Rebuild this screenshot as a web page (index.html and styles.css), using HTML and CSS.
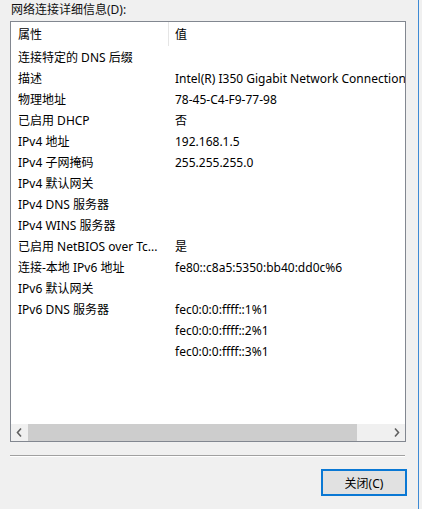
FILE: index.html
```html
<!DOCTYPE html>
<html lang="zh-CN">
<head>
<meta charset="utf-8">
<title>网络连接详细信息</title>
<link rel="stylesheet" href="styles.css">
</head>
<body>
<div class="dialog">
  <div class="label">网络连接详细信息(D):</div>
  <div class="listbox">
    <div class="header">
      <div class="c1">属性</div>
      <div class="c2">值</div>
    </div>
    <div class="rows">
      <div class="row"><div class="c1">连接特定的 DNS 后缀</div><div class="c2"></div></div>
      <div class="row"><div class="c1">描述</div><div class="c2">Intel(R) I350 Gigabit Network Connection</div></div>
      <div class="row"><div class="c1">物理地址</div><div class="c2">78-45-C4-F9-77-98</div></div>
      <div class="row"><div class="c1">已启用 DHCP</div><div class="c2">否</div></div>
      <div class="row"><div class="c1">IPv4 地址</div><div class="c2">192.168.1.5</div></div>
      <div class="row"><div class="c1">IPv4 子网掩码</div><div class="c2">255.255.255.0</div></div>
      <div class="row"><div class="c1">IPv4 默认网关</div><div class="c2"></div></div>
      <div class="row"><div class="c1">IPv4 DNS 服务器</div><div class="c2"></div></div>
      <div class="row"><div class="c1">IPv4 WINS 服务器</div><div class="c2"></div></div>
      <div class="row"><div class="c1">已启用 NetBIOS over Tc...</div><div class="c2">是</div></div>
      <div class="row"><div class="c1">连接-本地 IPv6 地址</div><div class="c2">fe80::c8a5:5350:bb40:dd0c%6</div></div>
      <div class="row"><div class="c1">IPv6 默认网关</div><div class="c2"></div></div>
      <div class="row"><div class="c1">IPv6 DNS 服务器</div><div class="c2">fec0:0:0:ffff::1%1</div></div>
      <div class="row"><div class="c1"></div><div class="c2">fec0:0:0:ffff::2%1</div></div>
      <div class="row"><div class="c1"></div><div class="c2">fec0:0:0:ffff::3%1</div></div>
    </div>
    <div class="hscroll">
      <div class="arrow">
        <svg width="17" height="17" viewBox="0 0 17 17"><path d="M10 4.5 L6.5 8.5 L10 12.5" fill="none" stroke="#606060" stroke-width="1.6"/></svg>
      </div>
      <div class="thumb"></div>
      <div class="track"></div>
      <div class="arrow">
        <svg width="17" height="17" viewBox="0 0 17 17"><path d="M7 4.5 L10.5 8.5 L7 12.5" fill="none" stroke="#606060" stroke-width="1.6"/></svg>
      </div>
    </div>
  </div>
  <div class="sep"></div>
  <div class="footer">
    <button class="btn">关闭(C)</button>
  </div>
</div>
</body>
</html>
```

FILE: styles.css
```css
html, body {
  margin: 0;
  padding: 0;
  background: #f0f0f0;
}
body {
  width: 422px;
  height: 509px;
  overflow: hidden;
  font-family: "Noto Sans", "Noto Sans CJK SC", sans-serif;
  font-size: 12px;
  color: #000;
}
.dialog {
  width: 418px;
  height: 509px;
  border-right: 1px solid #3d8ad4;
  display: flex;
  flex-direction: column;
}
.label {
  height: 21px;
  box-sizing: border-box;
  padding-top: 1px;
  line-height: 17px;
  padding-left: 11px;
  color: #111;
}
.listbox {
  margin-left: 10px;
  width: 396px;
  height: 421px;
  box-sizing: border-box;
  border: 1px solid #828790;
  background: #fff;
  display: flex;
  flex-direction: column;
  overflow: hidden;
}
.header {
  height: 24px;
  display: flex;
  flex: none;
  overflow: hidden;
}
.header .c1 {
  border-right: 1px solid #e5e5e5;
}
.header .c1, .header .c2 {
  padding-top: 1px;
  line-height: 23px;
}
.c1 {
  width: 150px;
  padding-left: 7px;
  flex: none;
  white-space: nowrap;
  overflow: hidden;
}
.c2 {
  padding-left: 6px;
  white-space: nowrap;
}
.rows {
  flex: 1;
  overflow: hidden;
  padding-top: 1px;
}
.row {
  height: 21px;
  display: flex;
}
.row .c1, .row .c2 {
  line-height: 21px;
}
.row .c1 {
  width: 150px;
  margin-right: 1px;
}
.hscroll {
  height: 17px;
  flex: none;
  display: flex;
  background: #f0f0f0;
}
.arrow {
  width: 17px;
  height: 17px;
  flex: none;
}
.arrow svg {
  display: block;
}
.thumb {
  width: 329px;
  background: #cdcdcd;
  flex: none;
}
.track {
  flex: 1;
}
.sep {
  margin-top: 13px;
  margin-left: 10px;
  width: 395px;
  height: 1px;
  background: #a0a0a0;
  border-bottom: 1px solid #fff;
}
.footer {
  margin-top: 12px;
  padding-left: 321px;
}
.btn {
  width: 86px;
  height: 27px;
  box-sizing: border-box;
  border: 2px solid #0a78d4;
  background: #e1e1e1;
  font-family: "Noto Sans", "Noto Sans CJK SC", sans-serif;
  font-size: 12px;
  color: #000;
  padding: 0;
  margin: 0;
}
```
